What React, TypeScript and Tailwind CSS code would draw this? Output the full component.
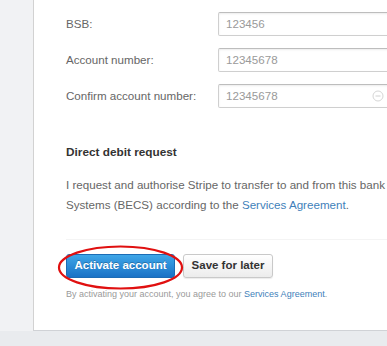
import React from "react";

const font = { fontFamily: '"Liberation Sans", Arial, sans-serif' };

function Field({ label, value, icon }: { label: string; value: string; icon?: boolean }) {
    return (
        <div className="flex items-center h-[24px]">
            <div className="w-[152px] text-[11.6px] text-[#666]">{label}</div>
            <div className="relative flex items-center w-[320px] h-[24px] rounded-[2px] border border-[#cfcfcf] border-t-[#bdbdbd] bg-white shadow-[inset_0_1px_2px_rgba(0,0,0,0.08)] pl-[7px] text-[11.6px] text-[#9a9a9a]">
                {value}
                {icon && (
                    <svg className="absolute left-[153px] top-[5px]" width="12" height="12" viewBox="0 0 12 12">
                        <circle cx="6" cy="6" r="5" fill="none" stroke="#d6d6d6" strokeWidth="1" />
                        <path d="M3.5 6h5" stroke="#d0d0d0" strokeWidth="1" />
                    </svg>
                )}
            </div>
        </div>
    );
}

export default function App() {
    return (
        <div style={font} className="w-[387px] h-[346px] overflow-hidden bg-[#e9ebee] flex flex-col">
            <div className="flex h-[331px] shrink-0">
                <div className="w-[33px] shrink-0 bg-[#f1f2f4]" />
                <div className="flex-1 bg-white border-l border-[#d2d2d2] border-b border-b-[#d0d2d6] pl-[32px] overflow-hidden">
                    <div className="w-[600px] pt-[12px] flex flex-col gap-[12px]">
                        <Field label="BSB:" value="123456" />
                        <Field label="Account number:" value="12345678" />
                        <Field label="Confirm account number:" value="12345678" icon />
                    </div>

                    <div className="w-[600px] mt-[36px] pb-[24px] border-b border-[#f4f4f4]">
                        <h3 className="text-[11.8px] font-bold text-[#333] leading-[16px]">Direct debit request</h3>
                        <p className="mt-[15px] text-[11.6px] leading-[20px] text-[#666] whitespace-nowrap">
                            I request and authorise Stripe to transfer to and from this bank
                            <br />
                            Systems (BECS) according to the <span className="text-[#3f7fba]">Services Agreement</span>.
                        </p>
                    </div>

                    <div className="relative flex gap-[8px] mt-[14px]">
                        <button className="h-[24px] w-[109px] rounded-[3px] border border-[#1c6cb5] bg-gradient-to-b from-[#3ea6e8] to-[#1a72c6] text-[11.5px] font-bold text-white [text-shadow:0_-1px_0_rgba(0,0,0,0.25)]">
                            Activate account
                        </button>
                        <button className="h-[24px] w-[90px] rounded-[3px] border border-[#c9c9c9] bg-gradient-to-b from-white to-[#ececec] text-[11.5px] font-bold text-[#333] shadow-[0_1px_1px_rgba(0,0,0,0.08)]">
                            Save for later
                        </button>
                        <svg className="absolute left-[-9px] top-[-9px] pointer-events-none" width="128" height="46" viewBox="0 0 128 46">
                            <ellipse cx="63.5" cy="22.5" rx="61.5" ry="21" fill="none" stroke="#e01010" strokeWidth="2.2" />
                        </svg>
                    </div>
                    <p className="mt-[10px] text-[9px] text-[#9a9a9a] whitespace-nowrap">
                        By activating your account, you agree to our <span className="text-[#3f7fba]">Services Agreement</span>.
                    </p>
                </div>
            </div>
        </div>
    );
}
